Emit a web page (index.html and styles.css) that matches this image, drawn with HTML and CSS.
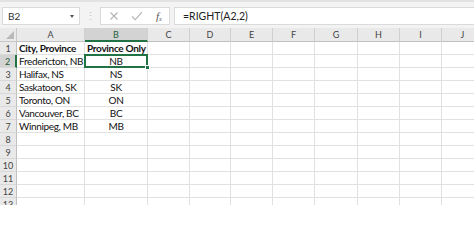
FILE: index.html
```html
<!DOCTYPE html>
<html>
<head>
<meta charset="utf-8">
<link rel="stylesheet" href="styles.css">
</head>
<body>
<div class="app">
  <div class="toolbar">
    <div class="namebox"><span class="ref">B2</span><span class="caret"></span></div>
    <div class="grip">⋮</div>
    <div class="iconbox">
      <svg class="ico" width="10" height="10" viewBox="0 0 10 10"><path d="M1.5 1.5 L8.5 8.5 M8.5 1.5 L1.5 8.5" stroke="#b4b4b4" stroke-width="1.1" fill="none"/></svg>
      <svg class="ico" width="12" height="10" viewBox="0 0 12 10"><path d="M1 5.5 L4.2 8.6 L11 1.2" stroke="#b4b4b4" stroke-width="1.1" fill="none"/></svg>
      <span class="fx">f<sub>x</sub></span>
    </div>
    <div class="formula">=RIGHT(A2,2)</div>
  </div>
  <div class="sheet">
    <div class="corner"><svg width="8" height="8" viewBox="0 0 8 8"><path d="M8 0 L8 8 L0 8 Z" fill="#b9b9b9"/></svg></div>
    <div class="ch">A</div>
    <div class="ch sel">B</div>
    <div class="ch">C</div>
    <div class="ch">D</div>
    <div class="ch">E</div>
    <div class="ch">F</div>
    <div class="ch">G</div>
    <div class="ch">H</div>
    <div class="ch">I</div>
    <div class="ch">J</div>

    <div class="rh">1</div><div class="c b">City, Province</div><div class="c b">Province Only</div><div class="c"></div><div class="c"></div><div class="c"></div><div class="c"></div><div class="c"></div><div class="c"></div><div class="c"></div><div class="c"></div>
    <div class="rh rsel">2</div><div class="c">Fredericton, NB</div><div class="c m active">NB</div><div class="c"></div><div class="c"></div><div class="c"></div><div class="c"></div><div class="c"></div><div class="c"></div><div class="c"></div><div class="c"></div>
    <div class="rh">3</div><div class="c">Halifax, NS</div><div class="c m">NS</div><div class="c"></div><div class="c"></div><div class="c"></div><div class="c"></div><div class="c"></div><div class="c"></div><div class="c"></div><div class="c"></div>
    <div class="rh">4</div><div class="c">Saskatoon, SK</div><div class="c m">SK</div><div class="c"></div><div class="c"></div><div class="c"></div><div class="c"></div><div class="c"></div><div class="c"></div><div class="c"></div><div class="c"></div>
    <div class="rh">5</div><div class="c">Toronto, ON</div><div class="c m">ON</div><div class="c"></div><div class="c"></div><div class="c"></div><div class="c"></div><div class="c"></div><div class="c"></div><div class="c"></div><div class="c"></div>
    <div class="rh">6</div><div class="c">Vancouver, BC</div><div class="c m">BC</div><div class="c"></div><div class="c"></div><div class="c"></div><div class="c"></div><div class="c"></div><div class="c"></div><div class="c"></div><div class="c"></div>
    <div class="rh">7</div><div class="c">Winnipeg, MB</div><div class="c m">MB</div><div class="c"></div><div class="c"></div><div class="c"></div><div class="c"></div><div class="c"></div><div class="c"></div><div class="c"></div><div class="c"></div>
    <div class="rh">8</div><div class="c"></div><div class="c"></div><div class="c"></div><div class="c"></div><div class="c"></div><div class="c"></div><div class="c"></div><div class="c"></div><div class="c"></div><div class="c"></div>
    <div class="rh">9</div><div class="c"></div><div class="c"></div><div class="c"></div><div class="c"></div><div class="c"></div><div class="c"></div><div class="c"></div><div class="c"></div><div class="c"></div><div class="c"></div>
    <div class="rh">10</div><div class="c"></div><div class="c"></div><div class="c"></div><div class="c"></div><div class="c"></div><div class="c"></div><div class="c"></div><div class="c"></div><div class="c"></div><div class="c"></div>
    <div class="rh">11</div><div class="c"></div><div class="c"></div><div class="c"></div><div class="c"></div><div class="c"></div><div class="c"></div><div class="c"></div><div class="c"></div><div class="c"></div><div class="c"></div>
    <div class="rh">12</div><div class="c"></div><div class="c"></div><div class="c"></div><div class="c"></div><div class="c"></div><div class="c"></div><div class="c"></div><div class="c"></div><div class="c"></div><div class="c"></div>
    <div class="rh">13</div><div class="c"></div><div class="c"></div><div class="c"></div><div class="c"></div><div class="c"></div><div class="c"></div><div class="c"></div><div class="c"></div><div class="c"></div><div class="c"></div>
  </div>
</div>
</body>
</html>
```

FILE: styles.css
```css
html, body {
  margin: 0;
  padding: 0;
  background: #ffffff;
}
.app {
  width: 474px;
  height: 205px;
  overflow: hidden;
  background: #f3f3f3;
  font-family: Lato, "Liberation Sans", sans-serif;
  border-top: 2px solid #e2e2e2;
  box-sizing: border-box;
}
.toolbar {
  display: flex;
  align-items: stretch;
  height: 26px;
  padding: 5px 0 3px 2px;
  box-sizing: border-box;
}
.namebox {
  width: 78px;
  background: #fff;
  border: 1px solid #dadada;
  box-sizing: border-box;
  display: flex;
  align-items: center;
  justify-content: space-between;
  padding: 0 5px 0 5px;
  font-size: 10px;
  color: #333;
}
.caret {
  width: 0;
  height: 0;
  border-left: 2.5px solid transparent;
  border-right: 2.5px solid transparent;
  border-top: 3px solid #555;
}
.grip {
  width: 20px;
  text-align: center;
  color: #c2c2c2;
  font-size: 11px;
  line-height: 18px;
}
.iconbox {
  width: 70px;
  background: #fff;
  border: 1px solid #dadada;
  box-sizing: border-box;
  display: flex;
  align-items: center;
  gap: 12px;
  padding: 0 0 0 8px;
}
.fx {
  font-family: "Liberation Serif", serif;
  font-style: italic;
  font-size: 11px;
  color: #555;
  line-height: 1;
  margin-left: 1px;
}
.fx sub {
  font-size: 6px;
  vertical-align: -1px;
}
.formula {
  flex: 1;
  margin-left: 4px;
  background: #fff;
  border: 1px solid #dadada;
  border-right: none;
  box-sizing: border-box;
  padding-left: 8px;
  font-size: 10.5px;
  color: #222;
  display: flex;
  align-items: center;
}
.sheet {
  display: grid;
  grid-template-columns: 17px 68px 63px 42px 41px 42px 42px 43px 42px 42px 42px;
  grid-template-rows: 14px repeat(13, 13px);
  background: #fff;
}
.corner, .ch, .rh {
  background: #e9e9e9;
  color: #444;
  font-size: 9px;
  box-sizing: border-box;
  display: flex;
  align-items: center;
  justify-content: center;
}
.corner {
  border-right: 1px solid #c8c8c8;
  border-bottom: 1px solid #c8c8c8;
  align-items: flex-end;
  justify-content: flex-end;
  padding: 0 2px 2px 0;
}
.ch {
  border-right: 1px solid #d0d0d0;
  border-bottom: 1px solid #c0c0c0;
}
.ch.sel {
  background: #d3d3d3;
  border-bottom: 2px solid #217346;
  color: #1e5e3a;
}
.rh {
  border-right: 1px solid #c0c0c0;
  border-bottom: 1px solid #d8d8d8;
}
.rh.rsel {
  background: #d3d3d3;
  border-right: 2px solid #217346;
  color: #1e5e3a;
}
.c {
  border-right: 1px solid #e1e1e1;
  border-bottom: 1px solid #e1e1e1;
  box-sizing: border-box;
  font-size: 10px;
  letter-spacing: -0.35px;
  color: #111;
  line-height: 12px;
  padding-left: 2px;
  white-space: nowrap;
  overflow: visible;
}
.c.b {
  font-weight: bold;
  letter-spacing: -0.3px;
}
.c.m {
  text-align: center;
  padding-left: 0;
}
.active {
  position: relative;
}
.active::after {
  content: "";
  position: absolute;
  left: -1px;
  top: -1px;
  right: -1px;
  bottom: -1px;
  border: 2px solid #217346;
}
.active::before {
  content: "";
  position: absolute;
  right: -3px;
  bottom: -3px;
  width: 5px;
  height: 5px;
  background: #217346;
  border: 1px solid #fff;
  box-sizing: border-box;
  z-index: 2;
}
```
